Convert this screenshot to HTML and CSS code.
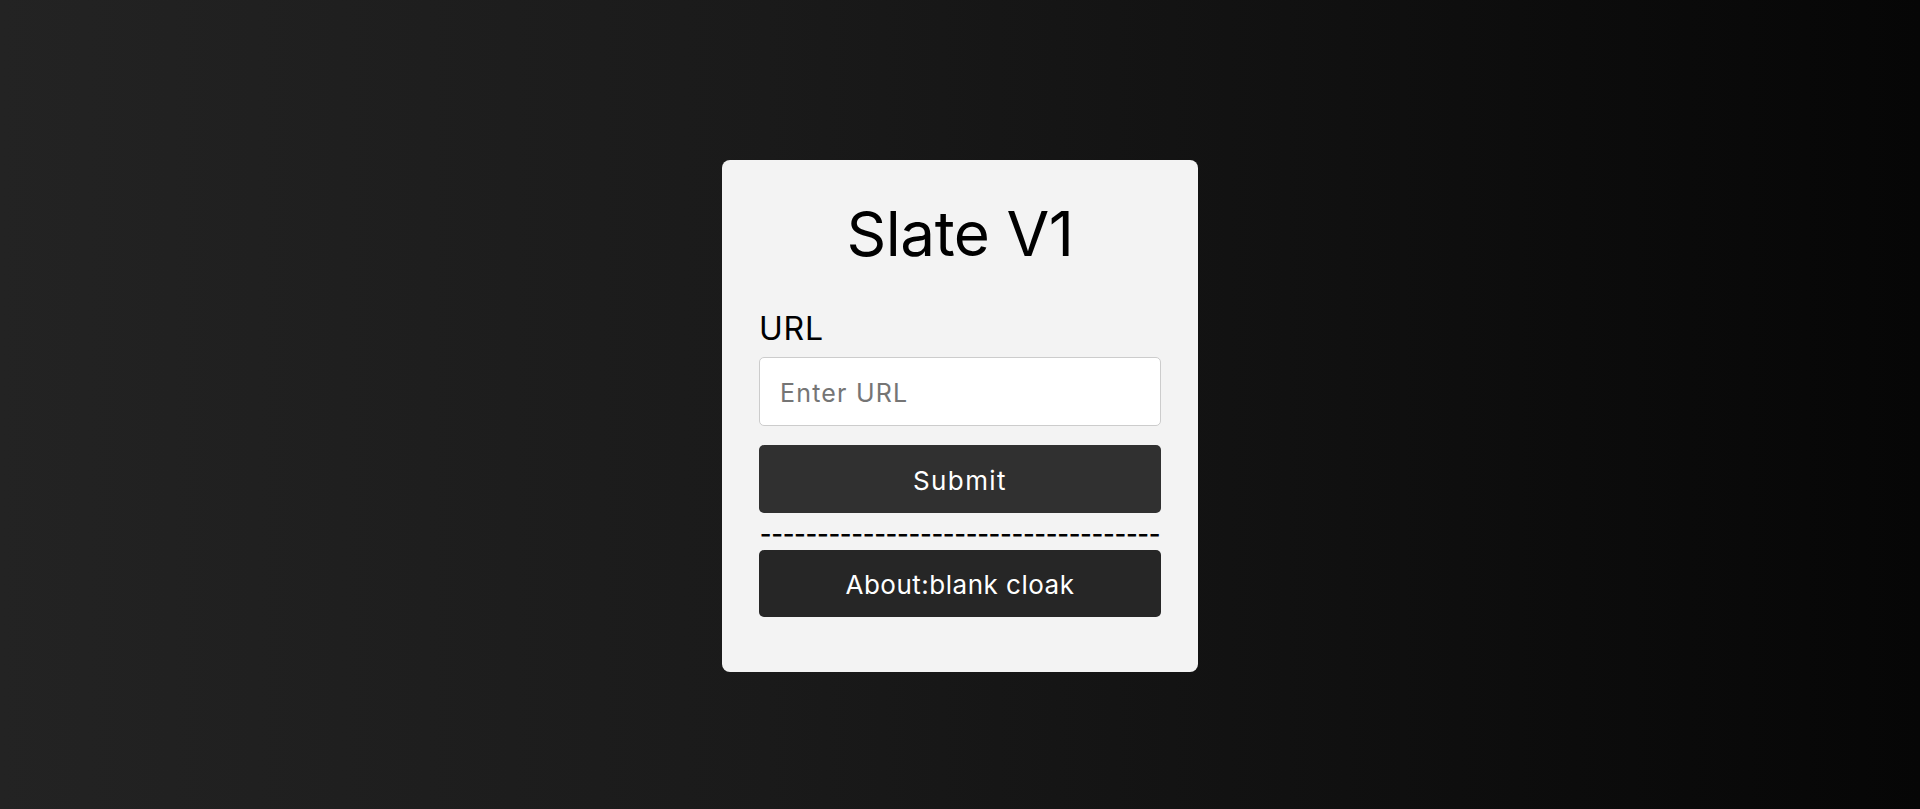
FILE: index.html
```html
<!DOCTYPE html>
<html lang="en">
<head>
<meta charset="utf-8">
<title>Slate V1</title>
<link rel="stylesheet" href="styles.css">
</head>
<body>
<main class="page">
  <section class="card">
    <h1 class="title">Slate V1</h1>
    <label class="label" for="url">URL</label>
    <input class="input" id="url" type="text" placeholder="Enter URL">
    <button class="btn btn-submit" type="button">Submit</button>
    <div class="divider">-----------------------------------</div>
    <button class="btn btn-cloak" type="button">About:blank cloak</button>
  </section>
</main>
</body>
</html>
```

FILE: styles.css
```css
* { box-sizing: border-box; }

html, body {
  margin: 0;
  padding: 0;
  height: 100%;
}

body {
  background: linear-gradient(90deg, #232323 0%, #1a1a1a 40%, #060606 100%);
  font-family: Inter, "Open Sans", sans-serif;
}

.page {
  height: 100vh;
  padding-top: 23px;
  display: flex;
  align-items: center;
  justify-content: center;
}

.card {
  width: 476px;
  background: #f3f3f3;
  border-radius: 8px;
  padding: 34px 37px 55px;
  display: flex;
  flex-direction: column;
}

.title {
  margin: 0;
  font-size: 62px;
  line-height: 80px;
  font-weight: 400;
  color: #000;
  text-align: center;
  letter-spacing: -0.5px;
}

.label {
  margin-top: 35px;
  font-size: 32px;
  line-height: 40px;
  color: #000;
  letter-spacing: 0.8px;
}

.input {
  margin: 8px 0 0;
  height: 69px;
  width: 100%;
  border: 1px solid #cccccc;
  border-radius: 5px;
  background: #fff;
  padding: 2px 20px 0;
  font-family: inherit;
  font-size: 25px;
  letter-spacing: 1.2px;
  color: #000;
  outline: none;
}

.input::placeholder { color: #757575; }

.btn {
  width: 100%;
  border: none;
  border-radius: 5px;
  color: #fff;
  font-family: inherit;
  font-size: 26px;
  cursor: pointer;
  padding: 2px 0 0;
}

.btn-submit {
  margin-top: 19px;
  height: 68px;
  background: #303030;
  letter-spacing: 1.4px;
}

.divider {
  margin: 10px 0 5px;
  height: 22px;
  font-family: Inter, sans-serif;
  font-size: 25.5px;
  line-height: 22px;
  font-weight: 500;
  letter-spacing: -0.35px;
  color: #000;
  text-align: center;
  white-space: nowrap;
}

.btn-cloak {
  height: 67px;
  background: #262626;
  letter-spacing: 0.5px;
}
```
